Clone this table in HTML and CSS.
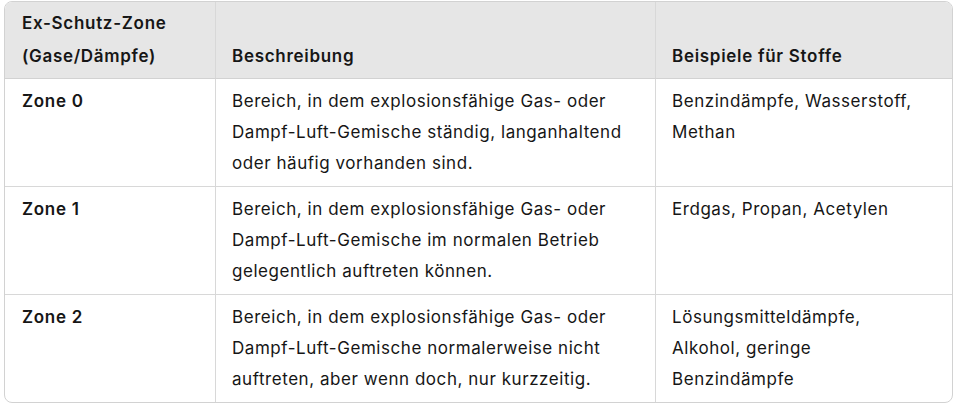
FILE: index.html
```html
<!DOCTYPE html>
<html lang="de">
<head>
<meta charset="utf-8">
<link rel="stylesheet" href="styles.css">
</head>
<body>
<div class="wrap">
<table class="zones">
  <colgroup>
    <col class="c1"><col class="c2"><col class="c3">
  </colgroup>
  <thead>
    <tr>
      <th>Ex-Schutz-Zone<br>(Gase/Dämpfe)</th>
      <th>Beschreibung</th>
      <th>Beispiele für Stoffe</th>
    </tr>
  </thead>
  <tbody>
    <tr>
      <td class="zone">Zone 0</td>
      <td>Bereich, in dem explosionsfähige Gas- oder<br>Dampf-Luft-Gemische ständig, langanhaltend<br>oder häufig vorhanden sind.</td>
      <td>Benzindämpfe, Wasserstoff,<br>Methan</td>
    </tr>
    <tr>
      <td class="zone">Zone 1</td>
      <td>Bereich, in dem explosionsfähige Gas- oder<br>Dampf-Luft-Gemische im normalen Betrieb<br>gelegentlich auftreten können.</td>
      <td>Erdgas, Propan, Acetylen</td>
    </tr>
    <tr>
      <td class="zone">Zone 2</td>
      <td>Bereich, in dem explosionsfähige Gas- oder<br>Dampf-Luft-Gemische normalerweise nicht<br>auftreten, aber wenn doch, nur kurzzeitig.</td>
      <td>Lösungsmitteldämpfe,<br>Alkohol, geringe<br>Benzindämpfe</td>
    </tr>
  </tbody>
</table>
</div>
</body>
</html>
```
FILE: styles.css
```css
html, body {
  margin: 0;
  background: #ffffff;
}
.wrap {
  padding: 1px 0 0 4px;
}
.zones {
  width: 949px;
  table-layout: fixed;
  border-collapse: separate;
  border-spacing: 0;
  border: 1px solid #d2d2d2;
  border-radius: 8px;
  overflow: hidden;
  font-family: Inter, "Noto Sans", sans-serif;
  font-size: 17px;
  letter-spacing: 0.55px;
  color: #161616;
}
.c1 { width: 210px; }
.c2 { width: 440px; }
.c3 { width: auto; }
th, td {
  text-align: left;
  padding: 7px 8px 7px 16px;
  line-height: 31px;
  border-left: 1px solid #d8d8d8;
  border-top: 1px solid #d8d8d8;
  white-space: nowrap;
}
th:first-child, td:first-child {
  border-left: none;
  padding-left: 17px;
}
thead th {
  background: #e6e6e6;
  font-weight: 600;
  letter-spacing: 0.7px;
  vertical-align: bottom;
  border-top: none;
  line-height: 33px;
  padding-top: 5px;
  padding-bottom: 5px;
  border-bottom: 1px solid #d2d2d2;
}
tbody tr:first-child td {
  border-top: none;
}
td {
  vertical-align: top;
  font-weight: 400;
}
td.zone {
  font-weight: 600;
  letter-spacing: 0.7px;
}
```
